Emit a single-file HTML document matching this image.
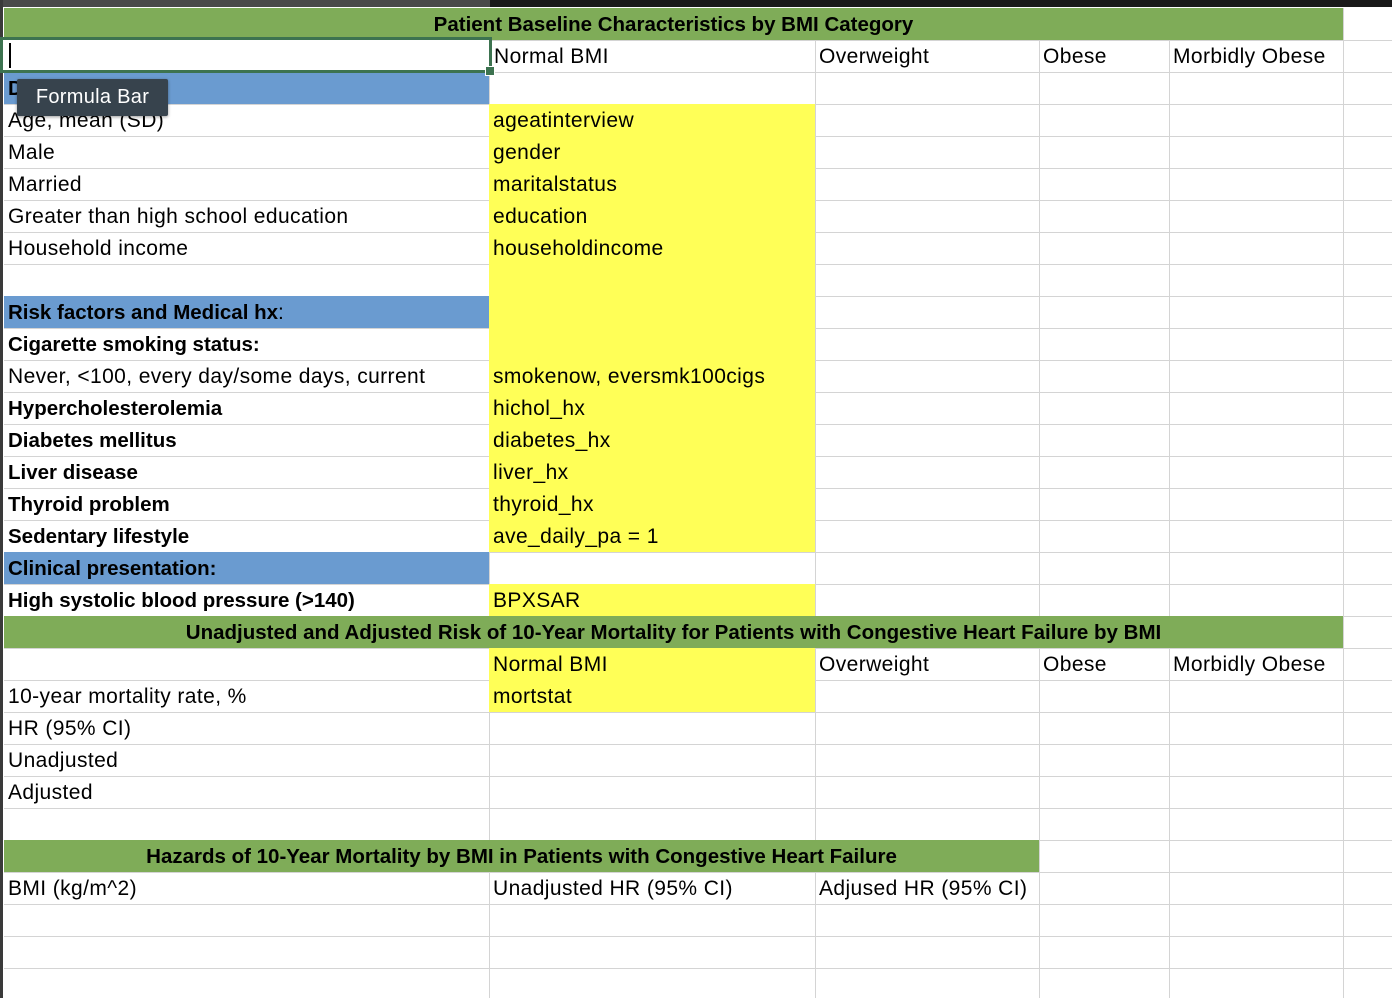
<!DOCTYPE html>
<html><head><meta charset="utf-8"><style>
body{margin:0;width:1392px;height:998px;overflow:hidden;background:#fff;position:relative;font-family:"Liberation Sans",sans-serif;font-size:21px;letter-spacing:0.4px;color:#000}
.a{position:absolute}
.h{position:absolute;left:4px;width:1388px;height:1px;background:#d4d4d4}
.v{position:absolute;top:8px;width:1px;height:990px;background:#d4d4d4}
.c{position:absolute;height:32px;line-height:34px;padding-left:4px;box-sizing:border-box;white-space:nowrap}
.g{background:#7fac58}.b{background:#6a9bd0}.y{background:#ffff57}
.t{font-weight:bold;text-align:center;padding-left:0;font-size:20.5px;letter-spacing:0}
.bo,b{font-weight:bold;font-size:20.5px;letter-spacing:0}
</style></head><body>
<div class="a" style="left:0;top:0;width:1392px;height:7px;background:#1a1a1a"></div>
<div class="a" style="left:0;top:0;width:490px;height:7px;background:#4a4a4a"></div>
<div class="a" style="left:0;top:0;width:3px;height:998px;background:#3a3a3a"></div>
<div class="v" style="left:489px"></div><div class="v" style="left:815px"></div><div class="v" style="left:1039px"></div><div class="v" style="left:1169px"></div><div class="v" style="left:1343px"></div>
<div class="h" style="top:40px"></div><div class="h" style="top:72px"></div><div class="h" style="top:104px"></div><div class="h" style="top:136px"></div><div class="h" style="top:168px"></div><div class="h" style="top:200px"></div><div class="h" style="top:232px"></div><div class="h" style="top:264px"></div><div class="h" style="top:296px"></div><div class="h" style="top:328px"></div><div class="h" style="top:360px"></div><div class="h" style="top:392px"></div><div class="h" style="top:424px"></div><div class="h" style="top:456px"></div><div class="h" style="top:488px"></div><div class="h" style="top:520px"></div><div class="h" style="top:552px"></div><div class="h" style="top:584px"></div><div class="h" style="top:616px"></div><div class="h" style="top:648px"></div><div class="h" style="top:680px"></div><div class="h" style="top:712px"></div><div class="h" style="top:744px"></div><div class="h" style="top:776px"></div><div class="h" style="top:808px"></div><div class="h" style="top:840px"></div><div class="h" style="top:872px"></div><div class="h" style="top:904px"></div><div class="h" style="top:936px"></div><div class="h" style="top:968px"></div>
<div class="a y" style="left:489px;top:104px;width:326px;height:448px"></div>
<div class="a y" style="left:489px;top:584px;width:326px;height:32px"></div>
<div class="a y" style="left:489px;top:648px;width:326px;height:64px"></div>
<div class="c g t" style="left:4px;top:8px;width:1339px">Patient Baseline Characteristics by BMI Category</div>
<div class="c" style="left:490px;top:40px">Normal BMI</div>
<div class="c" style="left:815px;top:40px">Overweight</div>
<div class="c" style="left:1039px;top:40px">Obese</div>
<div class="c" style="left:1169px;top:40px">Morbidly Obese</div>
<div class="c b bo" style="left:4px;top:72px;width:485px">Demographics</div>
<div class="c" style="left:4px;top:104px">Age, mean (SD)</div><div class="c" style="left:489px;top:104px">ageatinterview</div>
<div class="c" style="left:4px;top:136px">Male</div><div class="c" style="left:489px;top:136px">gender</div>
<div class="c" style="left:4px;top:168px">Married</div><div class="c" style="left:489px;top:168px">maritalstatus</div>
<div class="c" style="left:4px;top:200px">Greater than high school education</div><div class="c" style="left:489px;top:200px">education</div>
<div class="c" style="left:4px;top:232px">Household income</div><div class="c" style="left:489px;top:232px">householdincome</div>
<div class="c b" style="left:4px;top:296px;width:485px"><b>Risk factors and Medical hx</b>:</div>
<div class="c bo" style="left:4px;top:328px">Cigarette smoking status:</div>
<div class="c" style="left:4px;top:360px">Never, &lt;100, every day/some days, current</div><div class="c" style="left:489px;top:360px">smokenow, eversmk100cigs</div>
<div class="c bo" style="left:4px;top:392px">Hypercholesterolemia</div><div class="c" style="left:489px;top:392px">hichol_hx</div>
<div class="c bo" style="left:4px;top:424px">Diabetes mellitus</div><div class="c" style="left:489px;top:424px">diabetes_hx</div>
<div class="c bo" style="left:4px;top:456px">Liver disease</div><div class="c" style="left:489px;top:456px">liver_hx</div>
<div class="c bo" style="left:4px;top:488px">Thyroid problem</div><div class="c" style="left:489px;top:488px">thyroid_hx</div>
<div class="c bo" style="left:4px;top:520px">Sedentary lifestyle</div><div class="c" style="left:489px;top:520px">ave_daily_pa = 1</div>
<div class="c b bo" style="left:4px;top:552px;width:485px">Clinical presentation:</div>
<div class="c bo" style="left:4px;top:584px">High systolic blood pressure (&gt;140)</div><div class="c" style="left:489px;top:584px">BPXSAR</div>
<div class="c g t" style="left:4px;top:616px;width:1339px">Unadjusted and Adjusted Risk of 10-Year Mortality for Patients with Congestive Heart Failure by BMI</div>
<div class="c" style="left:489px;top:648px">Normal BMI</div>
<div class="c" style="left:815px;top:648px">Overweight</div>
<div class="c" style="left:1039px;top:648px">Obese</div>
<div class="c" style="left:1169px;top:648px">Morbidly Obese</div>
<div class="c" style="left:4px;top:680px">10-year mortality rate, %</div><div class="c" style="left:489px;top:680px">mortstat</div>
<div class="c" style="left:4px;top:712px">HR (95% CI)</div>
<div class="c" style="left:4px;top:744px">Unadjusted</div>
<div class="c" style="left:4px;top:776px">Adjusted</div>
<div class="c g t" style="left:4px;top:840px;width:1035px">Hazards of 10-Year Mortality by BMI in Patients with Congestive Heart Failure</div>
<div class="c" style="left:4px;top:872px">BMI (kg/m^2)</div>
<div class="c" style="left:489px;top:872px">Unadjusted HR (95% CI)</div>
<div class="c" style="left:815px;top:872px">Adjused HR (95% CI)</div>
<div class="a" style="left:0;top:37px;width:486px;height:30px;border:3px solid #3d7350;background:#fff"></div>
<div class="a" style="left:9px;top:43px;width:2px;height:25px;background:#000"></div>
<div class="a" style="left:485px;top:66px;width:8px;height:8px;background:#3d7350;border:1px solid #fff"></div>
<div class="a" style="left:17px;top:79px;width:151px;height:37px;background:#37434d;color:#fff;font-size:20px;letter-spacing:0.3px;line-height:37px;text-align:center;border-radius:2px;box-shadow:0 1px 3px rgba(0,0,0,.4)">Formula Bar</div>
</body></html>
